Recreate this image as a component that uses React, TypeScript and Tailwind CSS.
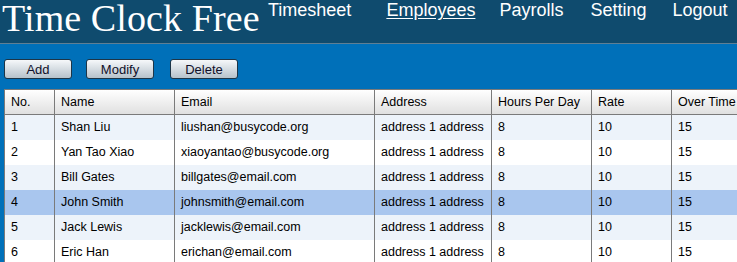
const columns = [
  { label: 'No.', w: 'w-[50px]' },
  { label: 'Name', w: 'w-[120px]' },
  { label: 'Email', w: 'w-[200px]' },
  { label: 'Address', w: 'w-[117px]' },
  { label: 'Hours Per Day', w: 'w-[100px]' },
  { label: 'Rate', w: 'w-[80px]' },
  { label: 'Over Time', w: 'w-[120px]' },
];

const employees = [
  ['1', 'Shan Liu', 'liushan@busycode.org'],
  ['2', 'Yan Tao Xiao', 'xiaoyantao@busycode.org'],
  ['3', 'Bill Gates', 'billgates@email.com'],
  ['4', 'John Smith', 'johnsmith@email.com'],
  ['5', 'Jack Lewis', 'jacklewis@email.com'],
  ['6', 'Eric Han', 'erichan@email.com'],
];

const App: React.FC = () => {
  const selected = '4';

  return (
    <div className="w-[737px] h-[262px] overflow-hidden bg-[#0070b9] font-['Liberation_Sans',Arial,sans-serif] text-[12.5px] text-black">
      {/* Top bar */}
      <header className="h-[44px] bg-[#0f4b6e] border-b border-[#5f7f94] flex items-start text-white">
        <h1 className="w-[268px] shrink-0 pl-[2px] text-[38px] leading-[36px] tracking-[0.1px] font-['Liberation_Serif','Times_New_Roman',serif] font-normal whitespace-nowrap">
          Time Clock Free
        </h1>
        <nav className="flex text-[18px] leading-[21px] whitespace-nowrap">
          <a>Timesheet</a>
          <a className="ml-[35px] underline underline-offset-2">Employees</a>
          <a className="ml-[24px]">Payrolls</a>
          <a className="ml-[27px]">Setting</a>
          <a className="ml-[26px]">Logout</a>
        </nav>
      </header>

      {/* Toolbar */}
      <div className="h-[45px] pl-[4px] pt-[15px] flex items-start">
        <button className="w-[68px] h-[20px] rounded-[3px] border border-[#1d3547] bg-gradient-to-b from-[#f6f8fa] to-[#b6c2cb] text-[13px] leading-none text-[#10102a]">
          Add
        </button>
        <button className="ml-[14px] w-[68px] h-[20px] rounded-[3px] border border-[#1d3547] bg-gradient-to-b from-[#f6f8fa] to-[#b6c2cb] text-[13px] leading-none text-[#10102a]">
          Modify
        </button>
        <button className="ml-[16px] w-[68px] h-[20px] rounded-[3px] border border-[#1d3547] bg-gradient-to-b from-[#f6f8fa] to-[#b6c2cb] text-[13px] leading-none text-[#10102a]">
          Delete
        </button>
      </div>

      {/* Employees table */}
      <div className="ml-[4px] border-l border-t border-[#7a7a7a] bg-white">
        <div className="flex h-[25px] border-b border-[#7a7a7a] bg-gradient-to-b from-[#ffffff] to-[#e0e0e0]">
          {columns.map((c, i) => (
            <div
              key={c.label}
              className={`${c.w} shrink-0 pl-[6px] flex items-center whitespace-nowrap ${i < columns.length - 1 ? 'border-r border-[#7a7a7a]' : ''}`}
            >
              {c.label}
            </div>
          ))}
        </div>
        {employees.map(([no, name, email], r) => {
          const cells = [no, name, email, 'address 1 address', '8', '10', '15'];
          const bg = no === selected ? 'bg-[#a9c6ee]' : r % 2 === 0 ? 'bg-[#edf3fa]' : 'bg-white';
          return (
            <div key={no} className={`flex h-[25px] ${bg}`}>
              {cells.map((v, i) => (
                <div
                  key={i}
                  className={`${columns[i].w} shrink-0 pl-[6px] flex items-center whitespace-nowrap ${i < columns.length - 1 ? 'border-r border-[#7a7a7a]' : ''}`}
                >
                  {v}
                </div>
              ))}
            </div>
          );
        })}
      </div>
    </div>
  );
};

export default App;
